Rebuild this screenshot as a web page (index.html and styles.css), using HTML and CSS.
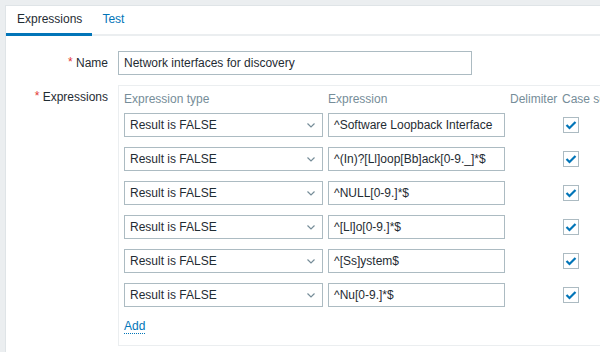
FILE: index.html
```html
<!DOCTYPE html>
<html>
<head>
<meta charset="utf-8">
<link rel="stylesheet" href="styles.css">
</head>
<body>
<div class="panel">
  <div class="tabs">
    <div class="tab active">Expressions</div>
    <div class="tab link">Test</div>
  </div>
  <div class="form">
    <div class="label"><span class="req">*</span> Name</div>
    <div class="field"><div class="input name-input">Network interfaces for discovery</div></div>
    <div class="label"><span class="req">*</span> Expressions</div>
    <div class="field">
      <div class="exprbox">
        <div class="grid">
          <div class="hd">Expression type</div>
          <div class="hd">Expression</div>
          <div class="hd">Delimiter</div>
          <div class="hd">Case sensitive</div>

          <div class="select">Result is FALSE<svg class="chev" width="8" height="5" viewBox="0 0 8 5"><polyline points="0.5,0.5 4,4 7.5,0.5" fill="none" stroke="#768d99" stroke-width="1.2"/></svg></div>
          <div class="input">^Software Loopback Interface</div>
          <div></div>
          <div class="cbcell"><span class="cb"><svg width="12" height="10" viewBox="0 0 12 10"><polyline points="1.5,5 4.5,8 10.5,2" fill="none" stroke="#0275b8" stroke-width="2.2"/></svg></span></div>

          <div class="select">Result is FALSE<svg class="chev" width="8" height="5" viewBox="0 0 8 5"><polyline points="0.5,0.5 4,4 7.5,0.5" fill="none" stroke="#768d99" stroke-width="1.2"/></svg></div>
          <div class="input">^(In)?[Ll]oop[Bb]ack[0-9._]*$</div>
          <div></div>
          <div class="cbcell"><span class="cb"><svg width="12" height="10" viewBox="0 0 12 10"><polyline points="1.5,5 4.5,8 10.5,2" fill="none" stroke="#0275b8" stroke-width="2.2"/></svg></span></div>

          <div class="select">Result is FALSE<svg class="chev" width="8" height="5" viewBox="0 0 8 5"><polyline points="0.5,0.5 4,4 7.5,0.5" fill="none" stroke="#768d99" stroke-width="1.2"/></svg></div>
          <div class="input">^NULL[0-9.]*$</div>
          <div></div>
          <div class="cbcell"><span class="cb"><svg width="12" height="10" viewBox="0 0 12 10"><polyline points="1.5,5 4.5,8 10.5,2" fill="none" stroke="#0275b8" stroke-width="2.2"/></svg></span></div>

          <div class="select">Result is FALSE<svg class="chev" width="8" height="5" viewBox="0 0 8 5"><polyline points="0.5,0.5 4,4 7.5,0.5" fill="none" stroke="#768d99" stroke-width="1.2"/></svg></div>
          <div class="input">^[Ll]o[0-9.]*$</div>
          <div></div>
          <div class="cbcell"><span class="cb"><svg width="12" height="10" viewBox="0 0 12 10"><polyline points="1.5,5 4.5,8 10.5,2" fill="none" stroke="#0275b8" stroke-width="2.2"/></svg></span></div>

          <div class="select">Result is FALSE<svg class="chev" width="8" height="5" viewBox="0 0 8 5"><polyline points="0.5,0.5 4,4 7.5,0.5" fill="none" stroke="#768d99" stroke-width="1.2"/></svg></div>
          <div class="input">^[Ss]ystem$</div>
          <div></div>
          <div class="cbcell"><span class="cb"><svg width="12" height="10" viewBox="0 0 12 10"><polyline points="1.5,5 4.5,8 10.5,2" fill="none" stroke="#0275b8" stroke-width="2.2"/></svg></span></div>

          <div class="select">Result is FALSE<svg class="chev" width="8" height="5" viewBox="0 0 8 5"><polyline points="0.5,0.5 4,4 7.5,0.5" fill="none" stroke="#768d99" stroke-width="1.2"/></svg></div>
          <div class="input">^Nu[0-9.]*$</div>
          <div></div>
          <div class="cbcell"><span class="cb"><svg width="12" height="10" viewBox="0 0 12 10"><polyline points="1.5,5 4.5,8 10.5,2" fill="none" stroke="#0275b8" stroke-width="2.2"/></svg></span></div>
        </div>
        <div class="add"><span class="addlink">Add</span></div>
      </div>
    </div>
  </div>
</div>
</body>
</html>
```

FILE: styles.css
```css
html, body {
  margin: 0;
  padding: 0;
}
body {
  background: #ebeef0;
  font-family: "Liberation Sans", Arial, sans-serif;
  font-size: 12px;
  color: #1f2c33;
  width: 600px;
  height: 352px;
  overflow: hidden;
}
.panel {
  margin: 5px 0 0 5px;
  width: 700px;
  height: 400px;
  background: #fff;
  border-left: 1px solid #dfe4e7;
  border-top: 1px solid #dfe4e7;
}
.tabs {
  display: flex;
  border-bottom: 2px solid #ebeef0;
  height: 28px;
}
.tab {
  padding: 0 10px 0 11px;
  line-height: 27px;
  height: 27px;
  border-bottom: 3px solid transparent;
}
.tab.active {
  border-bottom-color: #0275b8;
}
.tab.link {
  color: #0275b8;
  padding-left: 10px;
}
.form {
  display: grid;
  grid-template-columns: 102px 1fr;
  column-gap: 10px;
  row-gap: 10px;
  padding-top: 15px;
}
.label {
  text-align: right;
  line-height: 24px;
}
.req {
  color: #e33734;
  font-size: 12px;
  position: relative;
  top: -1px;
}
.input, .select {
  box-sizing: border-box;
  height: 24px;
  line-height: 22px;
  border: 1px solid #acbbc2;
  padding: 0 5px;
  background: #fff;
  white-space: nowrap;
  overflow: hidden;
}
.name-input {
  width: 354px;
}
.exprbox {
  border: 1px solid #ebeef0;
  border-right: none;
  padding: 4px 5px 11px 5px;
  width: 600px;
}
.grid {
  display: grid;
  grid-template-columns: 199px 177px 47px 100px;
  column-gap: 5px;
  row-gap: 10px;
}
.hd {
  color: #768d99;
  line-height: 18px;
  margin-bottom: -5px;
  white-space: nowrap;
}
.select {
  display: flex;
  align-items: center;
  justify-content: space-between;
  padding-right: 7px;
}
.chev {
  display: block;
}
.cbcell {
  display: flex;
  align-items: center;
  padding-left: 1px;
  margin-top: -1px;
}
.cb {
  box-sizing: border-box;
  width: 16px;
  height: 16px;
  border: 1px solid #acbbc2;
  display: flex;
  align-items: center;
  justify-content: center;
}
.cb svg {
  display: block;
}
.add {
  margin-top: 11px;
  line-height: 16px;
}
.addlink {
  color: #0275b8;
  border-bottom: 1px dotted #0275b8;
}
```
